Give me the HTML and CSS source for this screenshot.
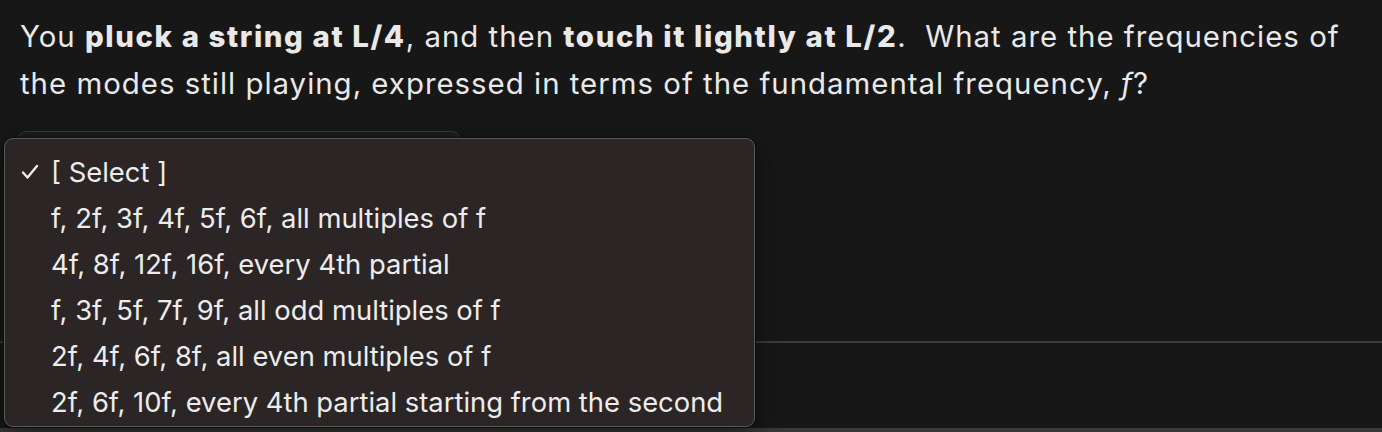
FILE: index.html
```html
<!DOCTYPE html>
<html>
<head>
<meta charset="utf-8">
<link rel="stylesheet" href="styles.css">
</head>
<body>
<div class="page">
  <p class="question">You <strong>pluck a string at L/4</strong>, and then <strong>touch it lightly at L/2</strong>.&nbsp; What are the frequencies of the modes still playing, expressed in terms of the fundamental frequency, <em>f</em>?</p>
  <div class="answer">
    <div class="select"></div>
    <ul class="menu">
      <li class="opt checked"><svg class="check" width="18" height="16" viewBox="0 0 18 16"><path d="M2 8.5 L6.5 13.5 L16 2" fill="none" stroke="#ececec" stroke-width="2.4" stroke-linecap="round" stroke-linejoin="round"/></svg>[ Select ]</li>
      <li class="opt">f, 2f, 3f, 4f, 5f, 6f, all multiples of f</li>
      <li class="opt">4f, 8f, 12f, 16f, every 4th partial</li>
      <li class="opt">f, 3f, 5f, 7f, 9f, all odd multiples of f</li>
      <li class="opt">2f, 4f, 6f, 8f, all even multiples of f</li>
      <li class="opt">2f, 6f, 10f, every 4th partial starting from the second</li>
    </ul>
  </div>
  <div class="rule"></div>
  <div class="footer"></div>
</div>
</body>
</html>
```
FILE: styles.css
```css
html, body {
  margin: 0;
  padding: 0;
  background: #171717;
  height: 432px;
  overflow: hidden;
}
.page {
  position: relative;
  height: 432px;
  display: flex;
  flex-direction: column;
}
.question {
  margin: 0;
  padding: 13px 20px 0 20px;
  width: 1342px;
  font-family: Inter, "Noto Sans", sans-serif;
  font-size: 29.4px;
  line-height: 47px;
  letter-spacing: 1px;
  color: #e9e9e9;
}
.question strong {
  font-weight: 800;
  letter-spacing: 1.6px;
}
.answer {
  position: relative;
  margin-top: 24px;
  height: 210px;
}
.select {
  margin-left: 18px;
  width: 440px;
  height: 44px;
  border: 1px solid #3b3b3b;
  border-radius: 8px;
  background: #1c1c1c;
}
.menu {
  position: absolute;
  left: 4px;
  top: 7px;
  width: 751px;
  height: 289px;
  margin: 0;
  padding: 10px 0 0 0;
  list-style: none;
  background: #2b2625;
  border: 1px solid #5c5a59;
  border-radius: 9px;
  box-shadow: 0 0 0 1px #0d0d0d, 0 8px 24px rgba(0,0,0,0.5);
  z-index: 2;
  box-sizing: border-box;
}
.opt {
  position: relative;
  height: 46px;
  line-height: 46px;
  padding-left: 46px;
  font-family: Inter, "Liberation Sans", sans-serif;
  font-size: 27.4px;
  color: #ececec;
  white-space: nowrap;
}
.check {
  position: absolute;
  left: 16px;
  top: 15px;
}
.rule {
  height: 2px;
  background: #3a3a3a;
}
.footer {
  margin-top: auto;
  height: 4px;
  background: #383838;
}
```
